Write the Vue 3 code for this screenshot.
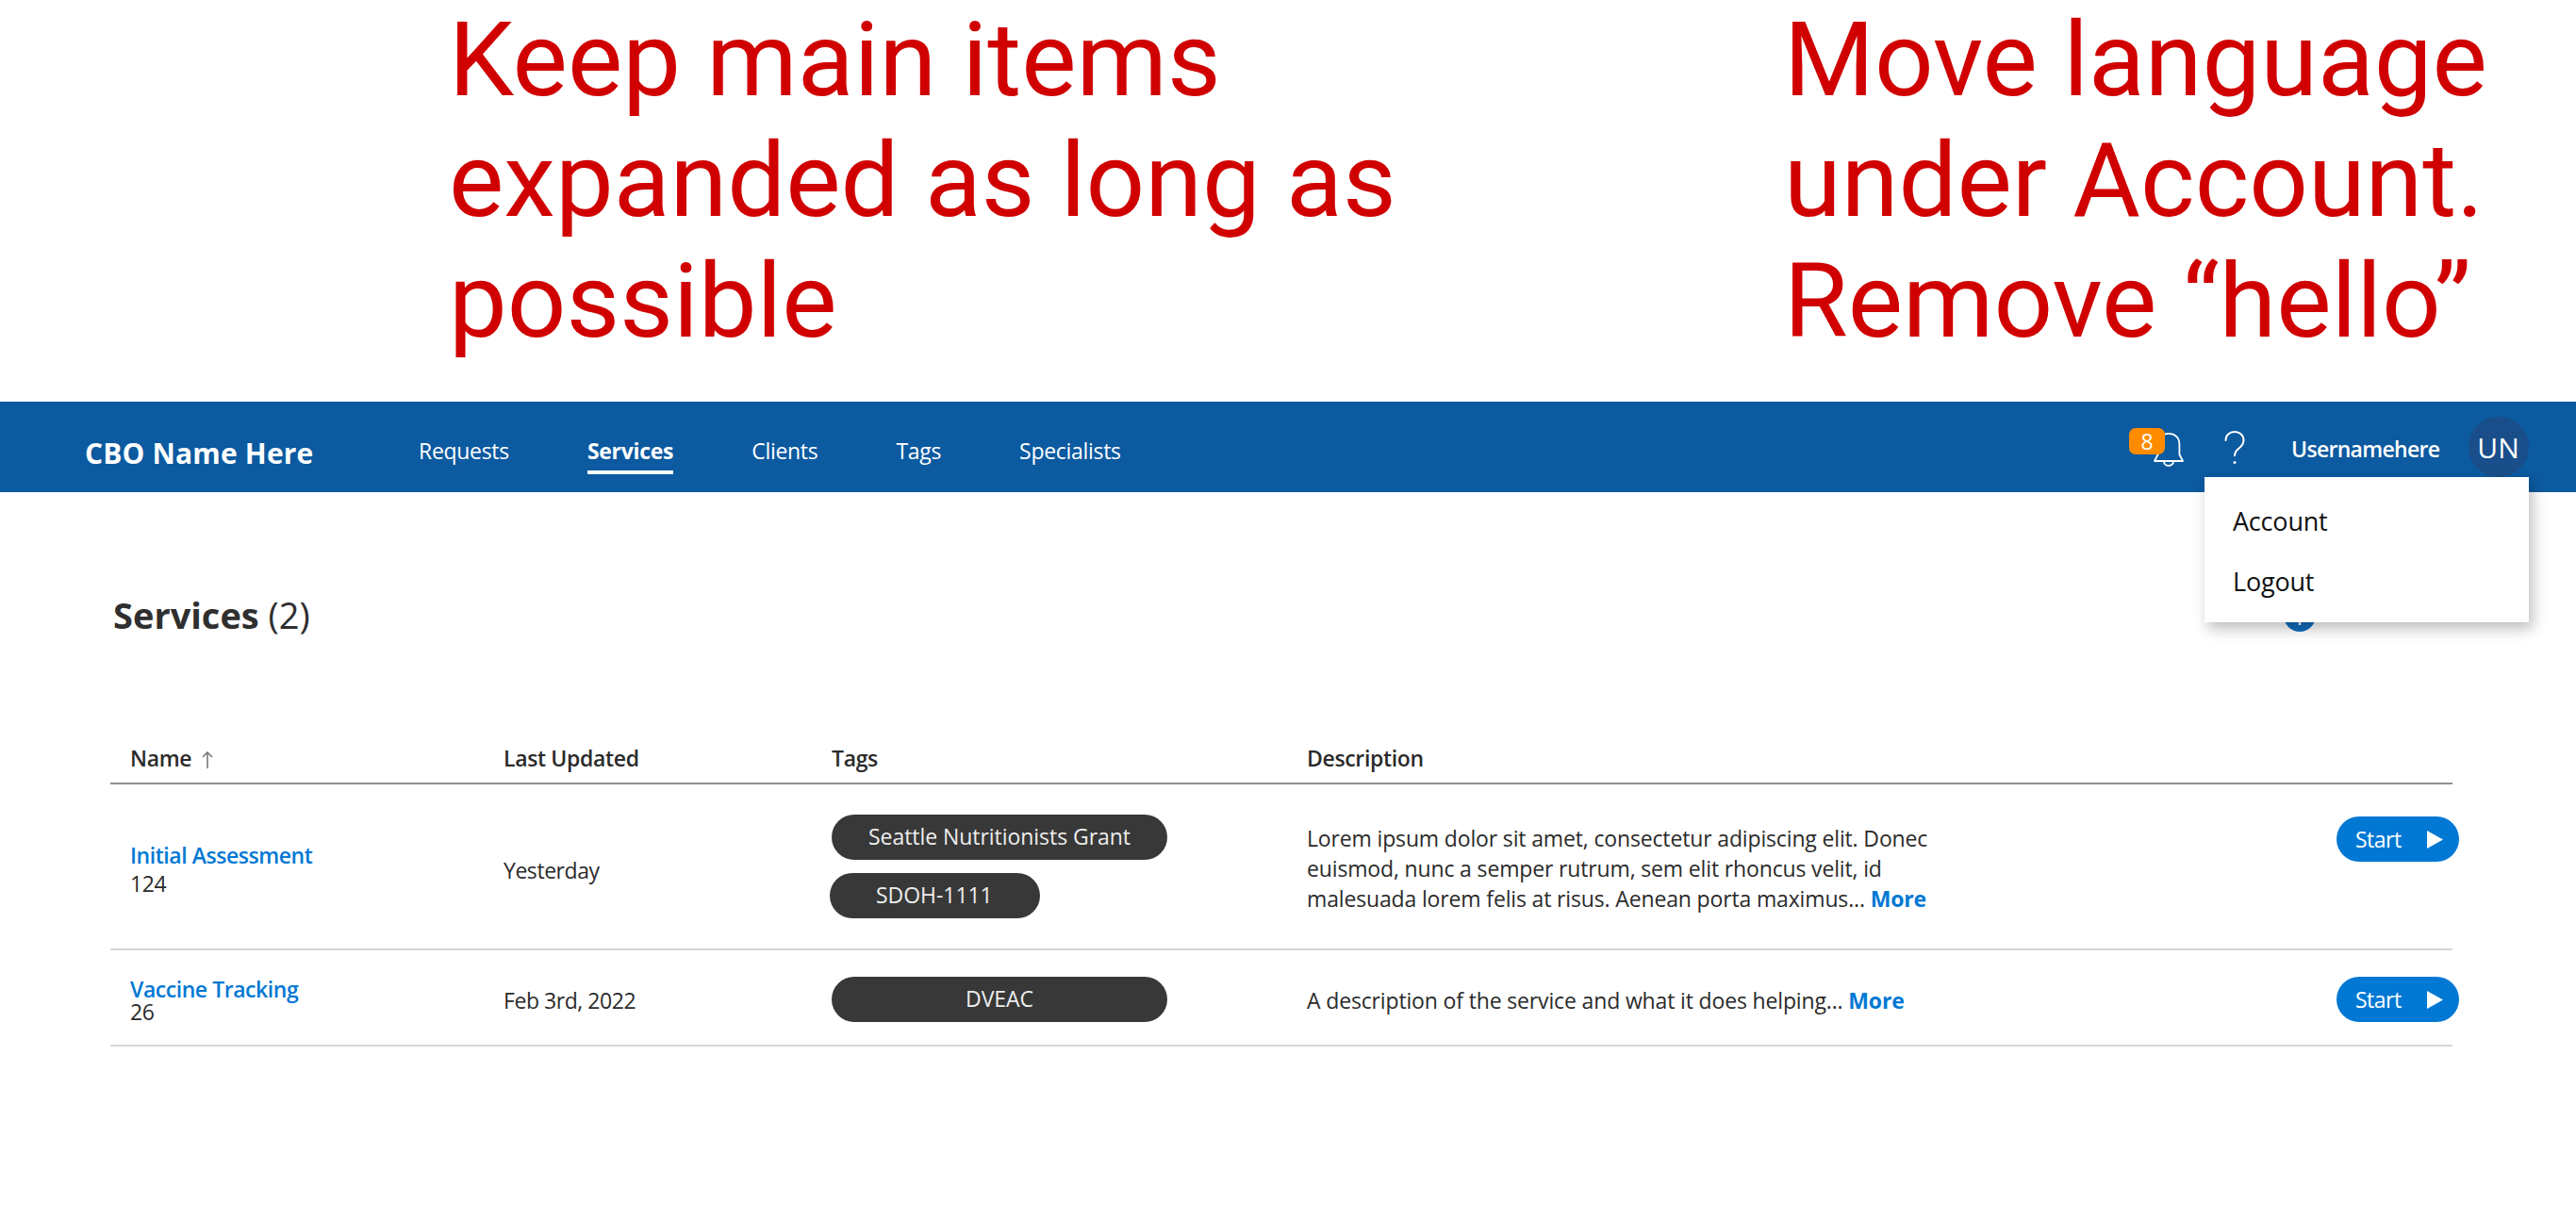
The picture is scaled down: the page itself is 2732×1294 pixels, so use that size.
<script setup>
const navItems = [
  { label: 'Requests', active: false },
  { label: 'Services', active: true },
  { label: 'Clients', active: false },
  { label: 'Tags', active: false },
  { label: 'Specialists', active: false }
]
const rows = [
  {
    name: 'Initial Assessment',
    count: '124',
    updated: 'Yesterday',
    tags: [
      { label: 'Seattle Nutritionists Grant', wide: true },
      { label: 'SDOH-1111', wide: false }
    ],
    lines: [
      'Lorem ipsum dolor sit amet, consectetur adipiscing elit. Donec',
      'euismod, nunc a semper rutrum, sem elit rhoncus velit, id',
      'malesuada lorem felis at risus. Aenean porta maximus...'
    ],
    tall: true
  },
  {
    name: 'Vaccine Tracking',
    count: '26',
    updated: 'Feb 3rd, 2022',
    tags: [{ label: 'DVEAC', wide: true }],
    lines: ['A description of the service and what it does helping...'],
    tall: false
  }
]
</script>

<template>
  <div class="page">
    <section class="notes">
      <p class="note">Keep main items<br />expanded as long as<br />possible</p>
      <p class="note">Move language<br />under Account.<br />Remove “hello”</p>
    </section>

    <header class="topbar">
      <div class="brand">CBO Name Here</div>
      <nav class="mainnav">
        <a v-for="item in navItems" :key="item.label" class="navlink" :class="{ active: item.active }">{{ item.label }}</a>
      </nav>
      <div class="tools">
        <div class="bell">
          <svg width="32" height="36" viewBox="0 0 32 36" fill="none" stroke="#fff" stroke-width="1.8" stroke-linejoin="round">
            <path d="M1 30h30l-3.600-7V12C27.400 5 22.500.9 16 .9S4.600 5 4.600 12v11z" />
            <path d="M11 30.500a5 4.500 0 0 0 10 0" />
          </svg>
          <span class="badge">8</span>
        </div>
        <svg class="help" width="22" height="36" viewBox="0 0 22 36" fill="none" stroke="#fff" stroke-width="2" stroke-linecap="round">
          <path d="M1.500 10C1.500 4.500 5.500 1 11 1s9.500 3.800 9.500 9c0 4-2 6-4.700 8.200-3 2.400-4.800 4-4.800 8" />
          <circle cx="11" cy="33.500" r="1.500" fill="#fff" stroke="none" />
        </svg>
        <span class="username">Usernamehere</span>
        <span class="avatar">UN</span>
      </div>
      <ul class="menu">
        <li>Account</li>
        <li>Logout</li>
      </ul>
    </header>

    <main class="content">
      <div class="headline">
        <h1 class="title"><strong>Services</strong> <span>(2)</span></h1>
        <div class="info">
          <svg width="34" height="34" viewBox="0 0 34 34">
            <circle cx="17" cy="17" r="17" fill="#0f6cbd" />
            <rect x="15.800" y="14" width="2.400" height="13" fill="#fff" />
          </svg>
          <span class="infotext">Learn more</span>
        </div>
      </div>

      <div class="table">
        <div class="grid headrow">
          <div class="namehead">
            Name
            <svg class="sort" width="12" height="18" viewBox="0 0 12 18" fill="none" stroke="#7a7a7a" stroke-width="1.6">
              <path d="M6 18V1M1 6l5-5 5 5" />
            </svg>
          </div>
          <div>Last Updated</div>
          <div>Tags</div>
          <div>Description</div>
        </div>
        <div v-for="row in rows" :key="row.name" class="grid row" :class="{ tall: row.tall }">
          <div class="cell namecell">
            <a class="link">{{ row.name }}</a>
            <span class="count">{{ row.count }}</span>
          </div>
          <div class="cell">{{ row.updated }}</div>
          <div class="tags">
            <span v-for="tag in row.tags" :key="tag.label" class="tag" :class="{ wide: tag.wide }">{{ tag.label }}</span>
          </div>
          <div class="cell desc">
            <template v-for="(line, i) in row.lines" :key="i">
              <span class="descline">{{ line }}<a v-if="i === row.lines.length - 1" class="more"> More</a></span>
            </template>
          </div>
          <button class="start" type="button">
            <span>Start</span>
            <svg width="17" height="19" viewBox="0 0 17 19"><path d="M0 0l17 9.500L0 19z" fill="#fff" /></svg>
          </button>
        </div>
      </div>
    </main>
  </div>
</template>

<style>
html, body { background: #fff; }
</style>

<style scoped>
.page {
  width: 2732px;
  height: 1294px;
  overflow: hidden;
  background: #fff;
  font-family: "Open Sans", "Noto Sans", sans-serif;
  color: #2b2b2b;
}
.notes {
  height: 426px;
  display: grid;
  grid-template-columns: 1416px 1fr;
  padding-left: 476px;
  box-sizing: border-box;
}
.note {
  margin: 0;
  font-family: Roboto, sans-serif;
  font-size: 110px;
  line-height: 128px;
  color: #d00000;
  white-space: nowrap;
}
.topbar {
  position: relative;
  height: 96px;
  background: #0c5aa0;
  display: flex;
  align-items: center;
  padding: 0 50px 0 90px;
  color: #fff;
}
.brand {
  width: 354px;
  font-size: 30px;
  font-weight: 700;
  letter-spacing: 0.15px;
  padding-top: 13px;
}
.mainnav {
  display: flex;
  gap: 83px;
  align-items: flex-start;
}
.navlink {
  font-size: 23px;
  letter-spacing: -0.3px;
  line-height: 32px;
  padding-bottom: 5px;
  border-bottom: 4px solid transparent;
  margin-top: 16px;
}
.navlink.active {
  font-weight: 700;
  border-bottom-color: #fff;
}
.tools {
  margin-left: auto;
  display: flex;
  align-items: center;
  height: 64px;
  align-self: flex-start;
  margin-top: 16px;
}
.bell {
  position: relative;
  width: 32px;
  height: 36px;
  margin-top: 6px;
}
.badge {
  position: absolute;
  left: -26px;
  top: -5px;
  width: 38px;
  height: 28px;
  border-radius: 7px;
  background: #ff8c00;
  font-size: 23px;
  font-weight: 500;
  line-height: 28px;
  text-align: center;
  color: #fff;
}
.help {
  margin-left: 43px;
  margin-top: 2px;
}
.username {
  margin-left: 49px;
  font-size: 23px;
  font-weight: 600;
  letter-spacing: -0.7px;
  width: 188px;
  padding-top: 3px;
}
.avatar {
  width: 64px;
  height: 64px;
  border-radius: 50%;
  background: #1a4e8a;
  font-size: 30px;
  line-height: 66px;
  text-align: center;
  text-indent: -1px;
}
.menu {
  position: absolute;
  right: 50px;
  top: 80px;
  z-index: 2;
  width: 344px;
  height: 154px;
  margin: 0;
  padding: 15px 0 0 30px;
  box-sizing: border-box;
  list-style: none;
  background: #fff;
  color: #111;
  font-size: 27px;
  line-height: 64px;
  letter-spacing: -0.2px;
  box-shadow: 4px 7px 14px rgba(0, 0, 0, 0.26);
}
.content {
  padding: 114px 131px 0 117px;
}
.headline {
  display: flex;
  justify-content: space-between;
  align-items: center;
  height: 34px;
  padding: 0 7px 0 3px;
}
.title {
  margin: 0 0 2px;
  font-size: 38px;
  font-weight: 400;
  letter-spacing: 0;
  line-height: 34px;
  color: #2f2f2f;
}
.title strong { font-weight: 700; }
.info {
  display: flex;
  align-items: center;
  gap: 19px;
}
.infotext {
  font-size: 22px;
  line-height: 30px;
  padding-bottom: 4px;
  color: #777;
}
.table { margin-top: 112px; }
.grid {
  display: grid;
  grid-template-columns: 417px 348px 504px 1fr auto;
}
.headrow {
  height: 48px;
  border-bottom: 2px solid #8f8f8f;
  font-size: 23px;
  font-weight: 600;
  line-height: 45px;
  letter-spacing: -0.35px;
  color: #2b2b2b;
}
.namehead { padding-left: 21px; }
.sort {
  margin-left: 5px;
  vertical-align: -2px;
}
.row {
  box-sizing: border-box;
  height: 102px;
  border-bottom: 2px solid #d6d6d6;
  padding-top: 28px;
  align-items: start;
}
.row.tall {
  height: 176px;
  padding-top: 32px;
}
.cell {
  font-size: 23px;
  line-height: 32px;
  letter-spacing: -0.45px;
  padding-top: 9px;
}
.tall .cell { padding-top: 43px; }
.namecell {
  display: flex;
  flex-direction: column;
  padding-left: 21px;
  line-height: 24px;
  padding-top: 1px;
}
.tall .namecell {
  line-height: 30px;
  padding-top: 28px;
}
.link { color: #0078d4; font-weight: 600; }
.tags {
  display: flex;
  flex-direction: column;
  align-items: flex-start;
  gap: 14px;
}
.tag {
  box-sizing: border-box;
  height: 48px;
  padding: 0 50px 0 49px;
  border-radius: 24px;
  background: #383838;
  color: #eee;
  font-size: 23px;
  line-height: 46px;
  letter-spacing: -0.05px;
  text-align: center;
  margin-left: -2px;
}
.tag.wide {
  width: 356px;
  padding: 0;
  margin-left: 0;
}
.desc {
  letter-spacing: -0.15px;
  display: flex;
  flex-direction: column;
}
.tall .desc { padding-top: 9px; }
.descline { white-space: nowrap; }
.more { color: #0078d4; font-weight: 700; }
.start {
  box-sizing: border-box;
  width: 130px;
  height: 48px;
  margin-right: -7px;
  padding: 0 17px 0 20px;
  border: 0;
  border-radius: 24px;
  background: #0078d4;
  color: #fff;
  font-family: inherit;
  font-size: 23px;
  letter-spacing: -0.5px;
  display: flex;
  align-items: center;
  justify-content: space-between;
}
.tall .start { margin-top: 2px; }
</style>
